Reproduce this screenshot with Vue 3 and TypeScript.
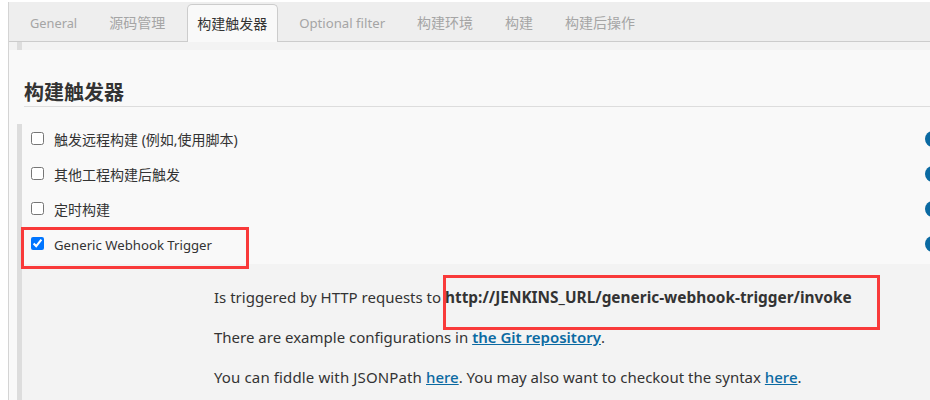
<script setup lang="ts">
const tabs = [
  { label: 'General', size: 12.8 },
  { label: '源码管理', size: 14 },
  { label: '构建触发器', size: 14 },
  { label: 'Optional filter', size: 13.2 },
  { label: '构建环境', size: 14 },
  { label: '构建', size: 14 },
  { label: '构建后操作', size: 14 },
]
const activeTab = '构建触发器'
const triggers = [
  { label: '触发远程构建 (例如,使用脚本)', checked: false, latin: false },
  { label: '其他工程构建后触发', checked: false, latin: false },
  { label: '定时构建', checked: false, latin: false },
  { label: 'Generic Webhook Trigger', checked: true, latin: true },
]
</script>

<template>
  <div class="page">
    <div class="frame">
      <nav class="tabs">
        <a
          v-for="t in tabs"
          :key="t.label"
          class="tab"
          :class="{ active: t.label === activeTab }"
          :style="{ fontSize: t.size + 'px' }"
        >{{ t.label }}</a>
      </nav>
      <div class="stub"><span class="stub-bar"></span></div>
      <div class="content">
        <h2 class="title">构建触发器</h2>
        <section class="section">
          <div v-for="t in triggers" :key="t.label" class="row">
            <label class="check" :class="{ latin: t.latin }">
              <input type="checkbox" :checked="t.checked" />
              <span>{{ t.label }}</span>
            </label>
            <span class="help"></span>
          </div>
          <div class="detail">
            <p>Is triggered by HTTP requests to <strong>http://JENKINS_URL/generic-webhook-trigger/invoke</strong></p>
            <p>There are example configurations in <a class="strong-link">the Git repository</a>.</p>
            <p><span class="fit">You can fiddle with JSONPath </span><a>here</a>. You may also want to checkout the syntax <a>here</a>.</p>
          </div>
        </section>
      </div>
    </div>
    <div class="mark mark-a"></div>
    <div class="mark mark-b"></div>
  </div>
</template>

<style>
html, body { margin: 0; background: #fff; overflow: hidden; }
</style>

<style scoped>
.page {
  position: relative;
  width: 930px;
  height: 400px;
  overflow: hidden;
  padding: 2px 0 0 8px;
  box-sizing: border-box;
  font-family: "Noto Sans", "Noto Sans CJK SC", sans-serif;
  color: #333;
}
.frame {
  height: 398px;
  border-left: 1px solid #d4d4d4;
  background: #f9f9f9;
}
.tabs {
  display: flex;
  height: 40px;
  padding-left: 5px;
  box-sizing: border-box;
  background: #eee;
  border-bottom: 1px solid #ccc;
}
.tab {
  height: 38px;
  margin-top: 2px;
  padding: 0 16px;
  line-height: 38px;
  color: #a5a5a5;
  box-sizing: border-box;
  white-space: nowrap;
}
.tab.active {
  height: 38px;
  margin: 2px 5px 0 6px;
  padding: 0 10px 0 9px;
  line-height: 37px;
  color: #333;
  background: #f9f9f9;
  border: 1px solid #ccc;
  border-bottom: 0;
  border-radius: 5px 5px 0 0;
}
.stub {
  height: 8px;
  background: #f3f3f3;
  padding-left: 8px;
}
.stub-bar {
  display: block;
  width: 5px;
  height: 8px;
  background: #ddd;
}
.content {
  padding: 0 0 0 15px;
}
.title {
  margin: 0;
  height: 57px;
  padding-top: 29px;
  box-sizing: border-box;
  font-size: 20px;
  line-height: 27px;
  font-weight: 700;
  color: #333;
  border-bottom: 1px solid #ddd;
}
.section {
  margin: 17px 0 0 -7px;
  border-left: 5px solid #ddd;
}
.row {
  display: flex;
  align-items: flex-start;
  justify-content: space-between;
  height: 35px;
  margin-right: -11px;
  padding: 8px 0 0 9px;
  box-sizing: border-box;
}
.check {
  display: flex;
  align-items: center;
  gap: 10px;
  height: 13px;
  font-size: 14px;
  line-height: 13px;
  color: #333;
  white-space: nowrap;
}
.check span { margin-top: 2px; }
.check.latin { font-size: 13.2px; }
.check.latin span { margin-top: 4px; }
.check input {
  width: 13px;
  height: 13px;
  margin: 0;
}
.help {
  width: 16px;
  height: 16px;
  margin-top: -1px;
  border-radius: 50%;
  background: #0b6aa2;
}
.detail {
  background: #f3f3f3;
  padding: 22px 0 0 192px;
  font-size: 15px;
  color: #333;
  min-height: 140px;
  box-sizing: border-box;
}
.detail p {
  margin: 0 0 18px;
  line-height: 22px;
  height: 22px;
  white-space: nowrap;
}
.detail strong { font-weight: 700; font-size: 15.4px; line-height: 1; }
.detail .fit { letter-spacing: 0.13px; }
.detail a {
  color: #0b6aa2;
  text-decoration: underline;
  font-weight: 500;
}
.detail a.strong-link { font-weight: 600; }
.mark {
  position: absolute;
  border: 3px solid #f93a3a;
  box-sizing: border-box;
}
.mark-a { left: 21px; top: 227px; width: 228px; height: 42px; }
.mark-b { left: 443px; top: 275px; width: 437px; height: 55px; }
</style>
